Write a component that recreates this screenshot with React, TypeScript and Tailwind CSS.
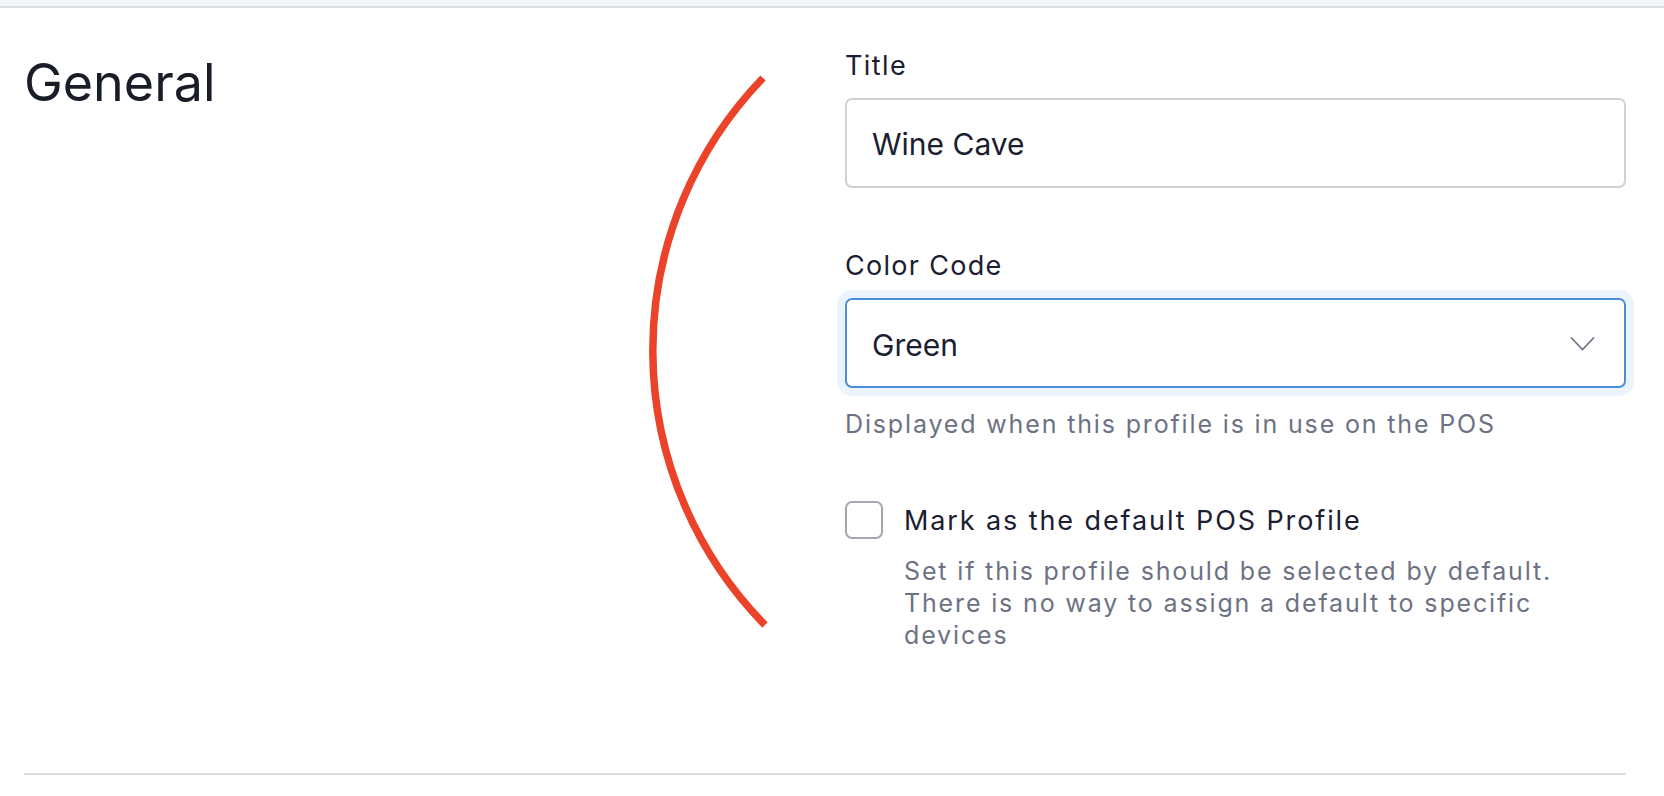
import React from 'react';

const FONT = { fontFamily: 'Inter, "Noto Sans", sans-serif' };

const Chevron: React.FC = () => (
  <svg width="25" height="15" viewBox="0 0 25 15" fill="none" className="shrink-0">
    <polyline points="1,1.5 12.5,13.5 24,1.5" stroke="#6b7080" strokeWidth="1.6" />
  </svg>
);

const Bracket: React.FC = () => (
  <svg
    className="absolute left-0 top-0 pointer-events-none"
    width="1664"
    height="796"
    viewBox="0 0 1664 796"
    fill="none"
  >
    <path d="M 763 78 A 392 392 0 0 0 765 625" stroke="#ea4329" strokeWidth="7.5" />
  </svg>
);

const App: React.FC = () => {
  return (
    <div className="relative w-[1664px] h-[796px] bg-white overflow-hidden text-[#1b2030]" style={FONT}>
      <div className="h-[8px] bg-[#f4f5f7] border-b-2 border-[#dcdde3]" />

      <div className="pl-[24px] pr-[38px]">
        <section className="flex">
          <div className="flex-1 pt-[49px]">
            <h2 className="text-[52px] leading-[52px] font-normal text-[#181d28]">General</h2>
          </div>

          <div className="w-[781px] pt-[41px] pb-[122px]">
            <label className="block text-[27px] leading-[32px] tracking-[1.4px] pt-[1px]">Title</label>
            <div className="mt-[16px] h-[90px] rounded-[7px] border-2 border-[#d0d1d7] flex items-center pt-[3px] pl-[25px] text-[30px]">
              Wine Cave
            </div>

            <label className="block mt-[61px] pt-[1px] text-[27px] leading-[32px] tracking-[1.3px]">Color Code</label>
            <div className="mt-[16px] h-[90px] rounded-[7px] border-2 border-[#4a8ed8] ring-[8px] ring-[#ebf4fc] flex items-center justify-between pl-[25px] pr-[29px] text-[30px]">
              <span className="pt-[5px]">Green</span>
              <Chevron />
            </div>
            <p className="mt-[20px] text-[25px] leading-[32px] tracking-[1.85px] text-[#6d7283]">
              Displayed when this profile is in use on the POS
            </p>

            <div className="mt-[61px] flex gap-[21px]">
              <div className="w-[38px] h-[38px] shrink-0 rounded-[7px] border-2 border-[#a4a7b1] bg-white" />
              <div className="pt-[4px]">
                <div className="text-[27px] leading-[32px] tracking-[1.9px]">Mark as the default POS Profile</div>
                <p className="mt-[18px] max-w-[700px] text-[25px] leading-[32px] tracking-[1.85px] text-[#6d7283]">
                  Set if this profile should be selected by default. There is no way to assign a default to specific devices
                </p>
              </div>
            </div>
          </div>
        </section>
        <div className="h-[2px] bg-[#dcdde2]" />
      </div>

      <Bracket />
    </div>
  );
};

export default App;
